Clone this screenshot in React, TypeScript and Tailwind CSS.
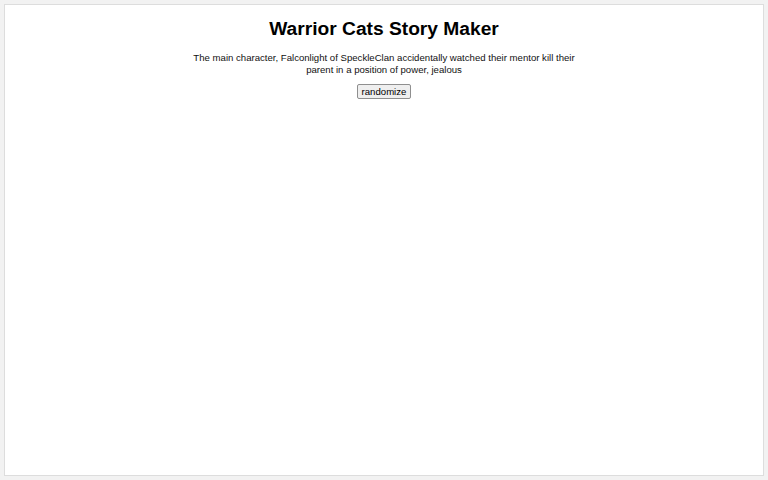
import React, { useState } from 'react';

const stories = [
  'The main character, Falconlight of SpeckleClan accidentally watched their mentor kill their parent in a position of power, jealous',
];

export default function App() {
  const [story, setStory] = useState(stories[0]);
  return <div className="h-screen w-full bg-[#f2f2f2] p-[4px] font-['Liberation_Sans',Arial,sans-serif] text-black">
      <div className="h-full border border-[#dddddd] bg-white flex flex-col items-center">
        <h1 className="mt-[13px] text-[19.2px] font-bold leading-[22px]">
          Warrior Cats Story Maker
        </h1>
        <p className="mt-[12px] max-w-[400px] text-center text-[9.6px] leading-[12px] text-[#111]">
          {story}
        </p>
        <button onClick={() => setStory(stories[Math.floor(Math.random() * stories.length)])} className="mt-[8px] h-[15px] rounded-[2px] border border-[#8f8f8f] bg-[#efefef] px-[4px] pt-[1px] text-[9.6px] leading-[12px]">
          randomize
        </button>
      </div>
    </div>;
}
